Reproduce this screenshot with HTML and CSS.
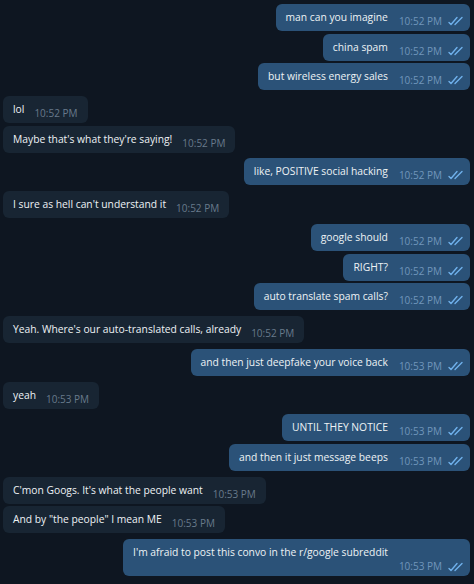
FILE: index.html
```html
<!DOCTYPE html>
<html>
<head>
  <title>Chat</title>
  <link rel="stylesheet" href="styles.css">
</head>
<body>

  <div class="chat">
    <div class="row out"><div class="bubble"><span class="text">man can you imagine</span><span class="meta"><span class="time">10:52 PM</span><svg class="ticks" viewBox="0 0 16 10"><path d="M1 6.5 L3 8.5 L9 1.5 M7 8.5 L14 1.5"/></svg></span></div></div>
    <div class="row out"><div class="bubble"><span class="text">china spam</span><span class="meta"><span class="time">10:52 PM</span><svg class="ticks" viewBox="0 0 16 10"><path d="M1 6.5 L3 8.5 L9 1.5 M7 8.5 L14 1.5"/></svg></span></div></div>
    <div class="row out"><div class="bubble"><span class="text">but wireless energy sales</span><span class="meta"><span class="time">10:52 PM</span><svg class="ticks" viewBox="0 0 16 10"><path d="M1 6.5 L3 8.5 L9 1.5 M7 8.5 L14 1.5"/></svg></span></div></div>

    <div class="row in first"><div class="bubble"><span class="text">lol</span><span class="meta"><span class="time">10:52 PM</span></span></div></div>
    <div class="row in"><div class="bubble"><span class="text">Maybe that's what they're saying!</span><span class="meta"><span class="time">10:52 PM</span></span></div></div>

    <div class="row out first"><div class="bubble"><span class="text">like, POSITIVE social hacking</span><span class="meta"><span class="time">10:52 PM</span><svg class="ticks" viewBox="0 0 16 10"><path d="M1 6.5 L3 8.5 L9 1.5 M7 8.5 L14 1.5"/></svg></span></div></div>

    <div class="row in first"><div class="bubble"><span class="text">I sure as hell can't understand it</span><span class="meta"><span class="time">10:52 PM</span></span></div></div>

    <div class="row out first"><div class="bubble"><span class="text">google should</span><span class="meta"><span class="time">10:52 PM</span><svg class="ticks" viewBox="0 0 16 10"><path d="M1 6.5 L3 8.5 L9 1.5 M7 8.5 L14 1.5"/></svg></span></div></div>
    <div class="row out"><div class="bubble"><span class="text">RIGHT?</span><span class="meta"><span class="time">10:52 PM</span><svg class="ticks" viewBox="0 0 16 10"><path d="M1 6.5 L3 8.5 L9 1.5 M7 8.5 L14 1.5"/></svg></span></div></div>
    <div class="row out"><div class="bubble"><span class="text">auto translate spam calls?</span><span class="meta"><span class="time">10:52 PM</span><svg class="ticks" viewBox="0 0 16 10"><path d="M1 6.5 L3 8.5 L9 1.5 M7 8.5 L14 1.5"/></svg></span></div></div>

    <div class="row in first"><div class="bubble"><span class="text">Yeah. Where's our auto-translated calls, already</span><span class="meta"><span class="time">10:52 PM</span></span></div></div>

    <div class="row out first"><div class="bubble"><span class="text">and then just deepfake your voice back</span><span class="meta"><span class="time">10:53 PM</span><svg class="ticks" viewBox="0 0 16 10"><path d="M1 6.5 L3 8.5 L9 1.5 M7 8.5 L14 1.5"/></svg></span></div></div>

    <div class="row in first"><div class="bubble"><span class="text">yeah</span><span class="meta"><span class="time">10:53 PM</span></span></div></div>

    <div class="row out first"><div class="bubble"><span class="text">UNTIL THEY NOTICE</span><span class="meta"><span class="time">10:53 PM</span><svg class="ticks" viewBox="0 0 16 10"><path d="M1 6.5 L3 8.5 L9 1.5 M7 8.5 L14 1.5"/></svg></span></div></div>
    <div class="row out"><div class="bubble"><span class="text">and then it just message beeps</span><span class="meta"><span class="time">10:53 PM</span><svg class="ticks" viewBox="0 0 16 10"><path d="M1 6.5 L3 8.5 L9 1.5 M7 8.5 L14 1.5"/></svg></span></div></div>

    <div class="row in first"><div class="bubble"><span class="text">C'mon Googs. It's what the people want</span><span class="meta"><span class="time">10:53 PM</span></span></div></div>
    <div class="row in"><div class="bubble"><span class="text">And by "the people" I mean ME</span><span class="meta"><span class="time">10:53 PM</span></span></div></div>

    <div class="row out first"><div class="bubble stacked"><span class="text">I'm afraid to post this convo in the r/google subreddit</span><span class="meta"><span class="time">10:53 PM</span><svg class="ticks" viewBox="0 0 16 10"><path d="M1 6.5 L3 8.5 L9 1.5 M7 8.5 L14 1.5"/></svg></span></div></div>
  </div>

</body>
</html>
```

FILE: styles.css
```css
body {
  background-color: #0e1621;
  margin: 0;
  font-family: "Open Sans", "Noto Sans", sans-serif;
}

.chat {
  display: flex;
  flex-direction: column;
  padding: 4px 4px 0 3px;
}

.row {
  display: flex;
  margin-top: 2.6px;
}

.row:first-child {
  margin-top: 0;
}

.row.first {
  margin-top: 5.8px;
}

.row.out {
  justify-content: flex-end;
}

.bubble {
  display: flex;
  align-items: flex-end;
  padding: 5px 10px 5px 10px;
  border-radius: 6px;
}

.out .bubble {
  background-color: #2b5278;
  padding-right: 6px;
}

.in .bubble {
  background-color: #182533;
}

.text {
  color: #eef2f5;
  font-size: 10.3px;
  line-height: 17px;
}

.meta {
  display: flex;
  align-items: center;
  gap: 6px;
  margin-left: 10px;
  position: relative;
  top: 2px;
  font-size: 10px;
  line-height: 14px;
}

.out .meta {
  margin-left: 11px;
}

.out .time {
  color: #7196bb;
}

.in .time {
  color: #687a8b;
}

.ticks {
  width: 16px;
  height: 10px;
  fill: none;
  stroke: #6fb0eb;
  stroke-width: 1.4;
  stroke-linecap: round;
  stroke-linejoin: round;
}

.bubble.stacked {
  flex-direction: column;
  align-items: flex-start;
  box-sizing: border-box;
  width: 347px;
  padding-top: 5px;
  padding-bottom: 3px;
}

.bubble.stacked .text {
  line-height: 16px;
}

.bubble.stacked .meta {
  align-self: flex-end;
  top: 0;
  line-height: 13px;
}
```
